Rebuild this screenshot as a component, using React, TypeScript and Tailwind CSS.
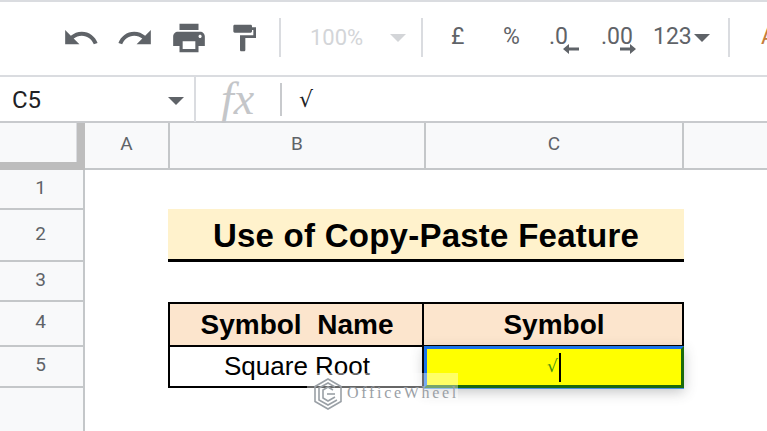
import React from 'react';

const ICON = '#5f6368';

const Caret = ({ color = ICON, className = '' }: { color?: string; className?: string }) => (
  <svg width="16" height="8" viewBox="0 0 16 8" className={className}>
    <path d="M0 0h16L8 8z" fill={color} />
  </svg>
);

const Icon = ({ d, size, className = '' }: { d: string; size: number; className?: string }) => (
  <svg width={size} height={size} viewBox="0 0 24 24" className={className}>
    <path d={d} fill={ICON} />
  </svg>
);

const Divider = ({ className = '' }: { className?: string }) => (
  <div className={`w-[2px] h-[39px] bg-[#dadce0] shrink-0 ${className}`} />
);

const Toolbar = () => (
  <div className="h-[75px] border-b-2 border-[#dadce0] flex items-center pb-[2px] overflow-hidden text-[#5f6368] font-['Roboto',sans-serif] text-[23px]">
    <Icon className="ml-[62px] shrink-0" size={38} d="M12.5 8c-2.65 0-5.05.99-6.9 2.6L2 7v9h9l-3.62-3.62c1.39-1.16 3.16-1.88 5.12-1.88 3.54 0 6.55 2.31 7.6 5.5l2.37-.78C21.08 11.03 17.15 8 12.5 8z" />
    <Icon className="ml-[16px] shrink-0" size={38} d="M18.4 10.6C16.55 8.99 14.15 8 11.5 8c-4.65 0-8.58 3.03-9.96 7.22L3.9 16c1.05-3.19 4.05-5.5 7.6-5.5 1.95 0 3.73.72 5.12 1.88L13 16h9V7l-3.6 3.6z" />
    <Icon className="ml-[16px] shrink-0" size={38} d="M19 8H5c-1.66 0-3 1.34-3 3v6h4v4h12v-4h4v-6c0-1.66-1.34-3-3-3zm-3 11H8v-5h8v5zm3-7c-.55 0-1-.45-1-1s.45-1 1-1 1 .45 1 1-.45 1-1 1zm-1-9H6v4h12V3z" />
    <Icon className="ml-[20px] shrink-0" size={32} d="M18 4V3c0-.55-.45-1-1-1H5c-.55 0-1 .45-1 1v4c0 .55.45 1 1 1h12c.55 0 1-.45 1-1V6h1v4H9v11c0 .55.45 1 1 1h2c.55 0 1-.45 1-1v-9h8V4h-3z" />
    <Divider className="ml-[19px]" />
    <span className="ml-[29px] text-[#d3d5d8] w-[55px] shrink-0 text-[22px]">100%</span>
    <Caret color="#d3d5d8" className="ml-[25px] shrink-0" />
    <Divider className="ml-[15px]" />
    <span className="ml-[28px] w-[18px] shrink-0">£</span>
    <span className="ml-[34px] w-[22px] shrink-0">%</span>
    <div className="relative ml-[24px] w-[30px] shrink-0">
      <span>.0</span>
      <svg width="16" height="10" viewBox="0 0 16 10" className="absolute left-[14px] top-[24px]">
        <path d="M0 5l6-5v3.5h10v3H6V10z" fill={ICON} />
      </svg>
    </div>
    <div className="relative ml-[22px] w-[42px] shrink-0">
      <span>.00</span>
      <svg width="16" height="10" viewBox="0 0 16 10" className="absolute left-[19px] top-[24px]">
        <path d="M16 5l-6-5v3.5H0v3h10V10z" fill={ICON} />
      </svg>
    </div>
    <span className="ml-[10px] w-[40px] shrink-0">123</span>
    <Caret className="shrink-0 ml-[1px]" />
    <Divider className="ml-[18px]" />
    <span className="ml-[31px] text-[#c77d3a] shrink-0">A</span>
  </div>
);

const FormulaBar = () => (
  <div className="h-[46px] border-b-2 border-[#c8cacd] flex items-center font-['Roboto',sans-serif]">
    <span className="ml-[12px] mt-[2px] w-[156px] shrink-0 text-[24px] text-[#202124]">C5</span>
    <Caret className="shrink-0 mt-[3px]" />
    <div className="ml-[10px] w-[2px] h-[45px] bg-[#dadce0] shrink-0" />
    <span className="ml-[25px] w-[59px] shrink-0 text-[#c4c6c9] italic text-[46px] leading-none font-['Liberation_Serif',serif]">fx</span>
    <div className="w-[2px] h-[33px] bg-[#c8cacd] shrink-0" />
    <span className="ml-[17px] text-[22px] text-[#202124] font-['DejaVu_Sans',sans-serif]">√</span>
  </div>
);

const headerCell = "flex items-center justify-center pb-[2px] bg-[#f8f9fa] text-[#5f6368] text-[19px] font-['Roboto',sans-serif]";
const rowCell = `${headerCell} pr-[2px] border-r-2 border-b-2 border-[#c4c7c9]`;

const Sheet = () => (
  <div className="grid grid-cols-[85px_83px_256px_260px_83px] grid-rows-[47px_40px_52px_40px_45px_41px_43px]">
    {/* column headers */}
    <div className="bg-[#bdbdbd] pr-[8px] pb-[8px]">
      <div className="h-full bg-[#f8f9fa] border-r border-[#dadce0]" />
    </div>
    <div className={`${headerCell} border-b-2 border-[#c4c7c9]`}>A</div>
    <div className={`${headerCell} border-b-2 border-l-2 border-[#c4c7c9]`}>B</div>
    <div className={`${headerCell} bg-[#e8eaed] border-b-2 border-l-2 border-r-2 border-[#c4c7c9]`}>C</div>
    <div className={`${headerCell} border-b-2 border-[#c4c7c9]`} />

    {/* row 1 */}
    <div className={rowCell}>1</div>
    <div className="col-span-4" />

    {/* row 2 */}
    <div className={rowCell}>2</div>
    <div />
    <div className="col-span-2 -mt-[1px] pt-[3px] bg-[#fff2cc] border-b-[3px] border-black flex items-center justify-center font-['Liberation_Sans',sans-serif] font-bold text-[33px] text-black tracking-[0.25px]">
      Use of Copy-Paste Feature
    </div>
    <div />

    {/* row 3 */}
    <div className={rowCell}>3</div>
    <div className="col-span-4" />

    {/* row 4 */}
    <div className={rowCell}>4</div>
    <div />
    <div className="bg-[#fce5cd] pl-[2px] border-2 border-black flex items-center justify-center font-['Liberation_Sans',sans-serif] font-bold text-[28px] text-black whitespace-pre">
      Symbol  Name
    </div>
    <div className="bg-[#fce5cd] pl-[2px] border-y-2 border-r-2 border-black flex items-center justify-center font-['Liberation_Sans',sans-serif] font-bold text-[28px] text-black">
      Symbol
    </div>
    <div />

    {/* row 5 */}
    <div className={`${rowCell} bg-[#e8eaed]`}>5</div>
    <div />
    <div className="border-x-2 border-b-2 border-black pl-[2px] flex items-center justify-center font-['Liberation_Sans',sans-serif] text-[26px] text-black">
      Square Root
    </div>
    <div className="relative -mt-[1px] bg-[#ffff00] border-[3px] border-t-[#1a73e8] border-l-[#1a73e8] border-r-[#1b6a0a] border-b-[#1b6a0a] shadow-[0_1px_0_#4a90e2,0_4px_12px_rgba(60,64,67,0.3)] flex items-center justify-center">
      <span className="text-[17px] text-[#3f8f10] font-['DejaVu_Sans',sans-serif] mr-[1px]">√</span>
      <div className="w-[2px] h-[29px] bg-black" />
    </div>
    <div />

    {/* row 6 */}
    <div className="bg-[#f8f9fa] border-r-2 border-[#c4c7c9]" />
    <div className="col-span-4" />
  </div>
);

// semi transparent watermark that sits on top of the sheet
const Watermark = () => (
  <div className="absolute left-[307px] top-[373px] w-[151px] h-[27px] bg-white/40">
    <svg width="30" height="32" viewBox="0 0 30 32" fill="none" stroke="#9aa0a6" strokeWidth="1.6" className="absolute left-[6px] top-[5px]">
      <path d="M15 1l13 7.5v15L15 31 2 23.500v-15z" />
      <path d="M22 9l-7-4-9 5v12l9 5 9-5" />
      <path d="M20 12l-5-3-5 3v8l5 3 7-4" />
      <path d="M14 16h8" />
    </svg>
    <span className="absolute left-[40px] top-[10px] font-['Liberation_Serif',serif] text-[16px] leading-[20px] tracking-[2.7px] text-[#9aa0a6] whitespace-nowrap">
      OfficeWheel
    </span>
  </div>
);

export default function App() {
  return (
    <div className="relative w-[767px] h-[431px] overflow-hidden bg-white">
      <div className="h-[2px] bg-[#dadce0]" />
      <Toolbar />
      <FormulaBar />
      <Sheet />
      <Watermark />
    </div>
  );
}
